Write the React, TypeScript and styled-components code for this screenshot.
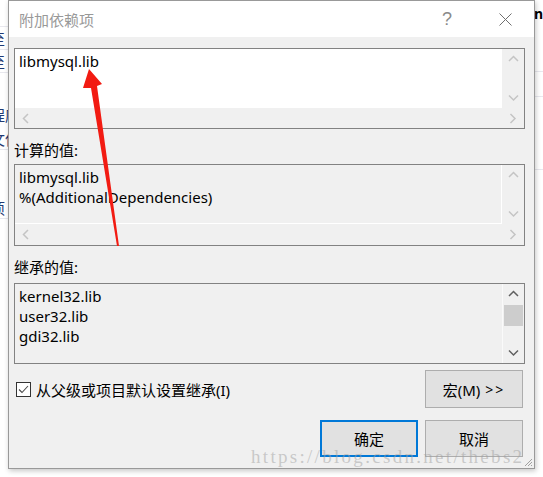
import styled, { createGlobalStyle } from 'styled-components'

const GlobalStyle = createGlobalStyle`
  html, body {
    margin: 0;
    padding: 0;
    background: #fff;
    overflow: hidden;
  }
  body {
    font-family: "Noto Sans", "Noto Sans CJK SC", sans-serif;
  }
`

type Chevron = 'up' | 'down' | 'left' | 'right'

const chevronPath: Record<Chevron, string> = {
  up: 'M1 6 L5.5 1.5 L10 6',
  down: 'M1 1.5 L5.5 6 L10 1.5',
  left: 'M6 1 L1.5 5.5 L6 10',
  right: 'M1.5 1 L6 5.5 L1.5 10',
}

const Arrow = ({ dir, dark }: { dir: Chevron; dark?: boolean }) => {
  const wide = dir === 'up' || dir === 'down'
  return (
    <svg width={wide ? 11 : 8} height={wide ? 8 : 11} viewBox={wide ? '0 0 11 8' : '0 0 8 11'}>
      <path d={chevronPath[dir]} fill="none" stroke={dark ? '#606060' : '#c4c4c4'} strokeWidth="1.5" />
    </svg>
  )
}

const App = () => {
  return (
    <>
      <GlobalStyle />
      <Page>
        <LeftStrip>
          <BgRow h={26}></BgRow>
          <BgRow h={22}><BgText>至</BgText></BgRow>
          <BgRow h={22}><BgText>至</BgText></BgRow>
          <BgRow h={30} plain></BgRow>
          <BgRow h={22} plain><BgText>程序</BgText></BgRow>
          <BgRow h={24}><BgText>文件</BgText></BgRow>
          <BgRow h={30} plain></BgRow>
          <BgRow h={18} plain><BgText>_</BgText></BgRow>
          <BgRow h={20}><BgText>项</BgText></BgRow>
        </LeftStrip>

        <Dialog>
          <TitleBar>
            <Title>附加依赖项</Title>
            <HelpButton>?</HelpButton>
            <CloseButton>
              <svg width="13" height="13" viewBox="0 0 13 13">
                <path d="M0.5 0.5 L12.5 12.5 M12.5 0.5 L0.5 12.5" stroke="#6f6f6f" strokeWidth="1" />
              </svg>
            </CloseButton>
          </TitleBar>

          <Body>
            <Field hScroll>
              <Content editable>libmysql.lib</Content>
              <VScroll>
                <ArrowButton><Arrow dir="up" /></ArrowButton>
                <Track />
                <ArrowButton><Arrow dir="down" /></ArrowButton>
              </VScroll>
              <HScroll>
                <ArrowButton wide><Arrow dir="left" /></ArrowButton>
                <Track />
                <ArrowButton wide><Arrow dir="right" /></ArrowButton>
              </HScroll>
            </Field>

            <Label>计算的值:</Label>
            <Field hScroll tall>
              <Content framed>
                libmysql.lib
                <br />
                %(AdditionalDependencies)
              </Content>
              <VScroll>
                <ArrowButton><Arrow dir="up" /></ArrowButton>
                <Track />
                <ArrowButton><Arrow dir="down" /></ArrowButton>
              </VScroll>
              <HScroll>
                <ArrowButton wide><Arrow dir="left" /></ArrowButton>
                <Track />
                <ArrowButton wide><Arrow dir="right" /></ArrowButton>
              </HScroll>
            </Field>

            <Label second>继承的值:</Label>
            <Field>
              <Content>
                kernel32.lib
                <br />
                user32.lib
                <br />
                gdi32.lib
              </Content>
              <VScroll divided>
                <ArrowButton><Arrow dir="up" dark /></ArrowButton>
                <Track>
                  <Thumb />
                </Track>
                <ArrowButton><Arrow dir="down" dark /></ArrowButton>
              </VScroll>
            </Field>

            <OptionRow>
              <CheckLabel>
                <CheckBox>
                  <svg width="11" height="9" viewBox="0 0 11 9">
                    <path d="M1 4.5 L4 7.5 L10 1" fill="none" stroke="#4a4a4a" strokeWidth="1.1" />
                  </svg>
                </CheckBox>
                从父级或项目默认设置继承(I)
              </CheckLabel>
              <Button tall>宏(M) <Chevrons>&gt;&gt;</Chevrons></Button>
            </OptionRow>

            <ButtonRow>
              <Button primary>确定</Button>
              <Button>取消</Button>
            </ButtonRow>
          </Body>

          <Grip>
            <svg width="10" height="10" viewBox="0 0 10 10">
              <path d="M9 2 L2 9 M9 5 L5 9 M9 8 L8 9" stroke="#a0a0a0" strokeWidth="1" />
            </svg>
          </Grip>
        </Dialog>

        <RightStrip>
          <BgRow h={47} plain><BoldText>nc</BoldText></BgRow>
          <BgRow h={24}></BgRow>
          <BgRow h={24}></BgRow>
          <BgRow h={50} plain></BgRow>
          <BgRow h={22}></BgRow>
        </RightStrip>

        <Watermark>https://blog.csdn.net/thebs2</Watermark>

        <Annotation width="543" height="477" viewBox="0 0 543 477">
          <polygon
            points="89,69 102,84 97,86 119,246 117,246 91,88 83,88"
            fill="#f21b12"
          />
        </Annotation>
      </Page>
    </>
  )
}

export default App

const Page = styled.div`
  position: relative;
  display: flex;
  width: 543px;
  height: 477px;
  overflow: hidden;
  background: #fff;
`

const LeftStrip = styled.div`
  width: 8px;
  flex-shrink: 0;
  overflow: hidden;
  display: flex;
  flex-direction: column;
`

const RightStrip = styled.div`
  width: 8px;
  flex-shrink: 0;
  overflow: hidden;
  display: flex;
  flex-direction: column;
`

const BgRow = styled.div<{ h: number; plain?: boolean }>`
  height: ${p => p.h}px;
  flex-shrink: 0;
  border-bottom: ${p => (p.plain ? 'none' : '1px solid #e8e8ee')};
  display: flex;
  align-items: flex-end;
  overflow: hidden;
  white-space: nowrap;
`

const BgText = styled.span`
  margin-left: -10px;
  font-size: 15px;
  line-height: 20px;
  color: #1f3a73;
`

const BoldText = styled.span`
  margin-left: -1px;
  margin-bottom: 24px;
  font-weight: 700;
  font-size: 14px;
  color: #000;
`

const Dialog = styled.div`
  position: relative;
  width: 527px;
  height: 469px;
  flex-shrink: 0;
  box-sizing: border-box;
  border: 1px solid #999;
  background: #f0f0f0;
  display: flex;
  flex-direction: column;
  box-shadow: 1px 2px 5px rgba(0, 0, 0, 0.22);
`

const TitleBar = styled.div`
  height: 36px;
  flex-shrink: 0;
  background: #fff;
  display: flex;
  align-items: center;
  padding-left: 10px;
`

const Title = styled.div`
  flex: 1;
  font-size: 15px;
  color: #999;
`

const HelpButton = styled.div`
  width: 30px;
  text-align: center;
  font-family: "Liberation Sans", sans-serif;
  font-size: 18px;
  color: #8a8a8a;
`

const CloseButton = styled.div`
  width: 30px;
  margin-left: 28px;
  margin-right: 14px;
  display: flex;
  justify-content: center;
`

const Body = styled.div`
  flex: 1;
  display: flex;
  flex-direction: column;
  padding: 11px 9px 0 5px;
`

const Field = styled.div<{ hScroll?: boolean; tall?: boolean }>`
  height: ${p => (p.tall ? 82 : 81)}px;
  box-sizing: border-box;
  border: 1px solid #828282;
  display: grid;
  grid-template-columns: 1fr 22px;
  grid-template-rows: ${p => (p.hScroll ? '59px 1fr' : '1fr')};
  background: #f0f0f0;
`

const Content = styled.div<{ editable?: boolean; framed?: boolean }>`
  background: ${p => (p.editable ? '#fff' : '#f0f0f0')};
  border-right: ${p => (p.framed ? '1px solid #fff' : 'none')};
  border-bottom: ${p => (p.framed ? '1px solid #fff' : 'none')};
  padding: 2px 4px;
  font-size: 15px;
  line-height: 20px;
  color: #000;
  overflow: hidden;
  white-space: nowrap;
`

const VScroll = styled.div<{ divided?: boolean }>`
  display: flex;
  flex-direction: column;
  border-left: ${p => (p.divided ? '1px solid #fafafa' : 'none')};
  background: #f0f0f0;
`

const HScroll = styled.div`
  grid-column: 1 / span 2;
  display: flex;
  align-items: stretch;
  background: #f0f0f0;
`

const ArrowButton = styled.div<{ wide?: boolean }>`
  ${p => (p.wide ? 'width: 22px;' : 'height: 20px;')}
  flex-shrink: 0;
  display: flex;
  align-items: center;
  justify-content: center;
`

const Track = styled.div`
  flex: 1;
  display: flex;
  flex-direction: column;
`

const Thumb = styled.div`
  height: 21px;
  margin: 1px 1px 0 1px;
  background: #cdcdcd;
`

const Label = styled.div<{ second?: boolean }>`
  margin-top: 11px;
  margin-bottom: ${p => (p.second ? 6 : 4)}px;
  font-size: 15px;
  line-height: 20px;
  color: #000;
`

const OptionRow = styled.div`
  margin-top: 6px;
  display: flex;
  align-items: center;
  justify-content: space-between;
  padding: 0 2px;
`

const CheckLabel = styled.label`
  display: flex;
  align-items: center;
  gap: 5px;
  font-family: "Noto Sans", "Noto Sans CJK SC", sans-serif;
  font-size: 15px;
  color: #000;
`

const CheckBox = styled.span`
  width: 15px;
  height: 15px;
  box-sizing: border-box;
  border: 1px solid #333;
  background: #fff;
  display: flex;
  align-items: center;
  justify-content: center;
`

const ButtonRow = styled.div`
  margin-top: 12px;
  display: flex;
  justify-content: flex-end;
  gap: 7px;
  padding-right: 2px;
`

const Button = styled.button<{ primary?: boolean; tall?: boolean }>`
  width: 98px;
  height: ${p => (p.tall ? 38 : 37)}px;
  box-sizing: border-box;
  background: #e1e1e1;
  border: ${p => (p.primary ? '2px solid #0078d7' : '1px solid #adadad')};
  font-family: "Noto Sans", "Noto Sans CJK SC", sans-serif;
  font-size: 15px;
  color: #000;
  padding: 0;
  display: flex;
  align-items: center;
  justify-content: center;
  gap: 5px;
`

const Chevrons = styled.span`
  letter-spacing: 2px;
  font-size: 14px;
`

const Grip = styled.div`
  position: absolute;
  right: 1px;
  bottom: 1px;
  line-height: 0;
`

const Watermark = styled.span`
  position: absolute;
  left: 251px;
  top: 446px;
  font-family: "Liberation Serif", serif;
  font-size: 19px;
  letter-spacing: 2.3px;
  color: rgba(160, 160, 160, 0.5);
  white-space: nowrap;
  pointer-events: none;
`

const Annotation = styled.svg`
  position: absolute;
  left: 0;
  top: 0;
  pointer-events: none;
`
